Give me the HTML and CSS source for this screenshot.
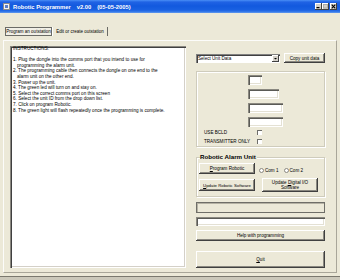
FILE: index.html
```html
<!DOCTYPE html>
<html>
<head>
<meta charset="utf-8">
<title>Robotic Programmer</title>
<link rel="stylesheet" href="styles.css">
</head>
<body>
<div class="window">
  <div class="titlebar">
    <svg class="app-icon" viewBox="0 0 7 7" width="7" height="7">
      <rect x="0.5" y="0.5" width="6" height="6" fill="#f4f4f4" stroke="#8c8c8c" stroke-width="1"/>
      <rect x="2" y="2" width="3" height="3" fill="#5a7fc8"/>
    </svg>
    <span class="title">Robotic Programmer<span class="gap"></span>v2.00<span class="gap"></span>(05-05-2005)</span>
    <div class="controls">
      <svg class="ctl" viewBox="0 0 7 7" width="7" height="7"><rect x="1.5" y="4" width="3" height="1.2" fill="#000"/></svg>
      <svg class="ctl" viewBox="0 0 7 7" width="7" height="7"><rect x="1.5" y="1.5" width="4" height="3.5" fill="none" stroke="#a8a8a8" stroke-width="0.9"/></svg>
      <svg class="ctl close" viewBox="0 0 7 7" width="7" height="7"><path d="M1.7 1.7 L5.3 5.3 M5.3 1.7 L1.7 5.3" stroke="#000" stroke-width="1.1"/></svg>
    </div>
  </div>

  <div class="tabs">
    <div class="tab active">Program an outstation</div>
    <div class="tab second">Edit or create outstation</div>
  </div>

  <div class="panel">
    <div class="instructions">
      <div>INSTRUCTIONS:</div>
      <div>&nbsp;</div>
      <div>1. Plug the dongle into the comms port that you intend to use for</div>
      <div class="cont">programming the alarm unit.</div>
      <div>2. The programming cable then connects the dongle on one end to the</div>
      <div class="cont">alarm unit on the other end.</div>
      <div>3. Power up the unit.</div>
      <div>4. The green led will turn on and stay on.</div>
      <div>5. Select the correct comms port on this screen</div>
      <div>6. Select the unit ID from the drop down list.</div>
      <div>7. Click on program Robotic.</div>
      <div>8. The green light will flash repeatedly once the programming is complete.</div>
    </div>

    <div class="side">
      <div class="combo-row">
        <div class="combo">
          <span>Select Unit Data</span>
          <span class="drop"><svg viewBox="0 0 7 7" width="7" height="7"><path d="M2 3 L5 3 L3.5 4.6 Z" fill="#000"/></svg></span>
        </div>
        <div class="btn copy">Copy unit data</div>
      </div>

      <div class="group unit">
        <div class="field f1"></div>
        <div class="field f2"></div>
        <div class="field f3"></div>
        <div class="field f4"></div>
        <div class="check-row"><span class="lbl">USE BCLD</span><span class="check"></span></div>
        <div class="check-row"><span class="lbl">TRANSMITTER ONLY</span><span class="check"></span></div>
      </div>

      <fieldset class="alarm">
        <legend>Robotic Alarm Unit</legend>
        <div class="alarm-row row1">
          <div class="btn prog"><span><u>P</u>rogram Robotic</span></div>
          <div class="radios">
            <span class="radio"></span><span class="radio-lbl">Com 1</span>
            <span class="radio"></span><span class="radio-lbl">Com 2</span>
          </div>
        </div>
        <div class="alarm-row row2">
          <div class="btn upd-rob"><span><u>U</u>pdate Robotic Software</span></div>
          <div class="btn upd-dig"><span>Update <u>D</u>igital I/O</span><span>Software</span></div>
        </div>
      </fieldset>

      <div class="status"></div>
      <div class="field wide"></div>
      <div class="btn help">Help with programming</div>
      <div class="btn quit"><span><u>Q</u>uit</span></div>
    </div>
  </div>

  <div class="frame-bottom"></div>
</div>
</body>
</html>
```

FILE: styles.css
```css
* { box-sizing: border-box; }
html, body { margin: 0; padding: 0; }
body {
  width: 340px;
  height: 280px;
  overflow: hidden;
  background: #ECE9D8;
  font-family: "Liberation Sans", Arial, sans-serif;
  font-size: 4.6px;
  color: #000;
}
.window {
  width: 340px;
  height: 280px;
  display: flex;
  flex-direction: column;
  background: #ECE9D8;
}

/* title bar */
.titlebar {
  height: 13px;
  flex: none;
  display: flex;
  align-items: center;
  padding-left: 3px;
  background: linear-gradient(#4A8EF6 0, #2063E4 2px, #1259DE 6px, #1A61E2 10px, #3A7DEA 12px, #6CA0EE 13px);
  color: #fff;
}
.app-icon { flex: none; display: block; }
.title {
  margin-left: 3px;
  font-weight: bold;
  font-size: 5.8px;
  white-space: nowrap;
}
.gap { display: inline-block; width: 6px; }
.controls {
  margin-left: auto;
  margin-right: 3px;
  display: flex;
}
.ctl {
  display: block;
  background: #D4D0C8;
  box-shadow: inset -1px -1px #404040, inset 1px 1px #fff;
}
.ctl.close { margin-left: 1px; }

/* tabs */
.tabs {
  display: flex;
  margin-top: 14px;
  padding-left: 5px;
  height: 9px;
  flex: none;
}
.tab {
  height: 9px;
  display: flex;
  align-items: center;
  justify-content: center;
  white-space: nowrap;
  font-size: 4.5px;
}
.tab.active {
  width: 47px;
  border: 1px solid #6b6b66;
  background: #F1EFE6;
}
.tab.second {
  width: 56px;
  border-left: 1px solid #fff;
  border-right: 1px solid #6b6b66;
}

/* panel */
.panel {
  flex: none;
  margin: 4px 0 0 3px;
  width: 334px;
  height: 233px;
  border: 1px solid;
  border-color: #FCFCFA #A9A699 #A9A699 #FCFCFA;
  display: flex;
  padding: 5px 10px 4px 6px;
}
.instructions {
  flex: none;
  width: 176px;
  height: 222px;
  background: #fff;
  box-shadow: inset 1px 1px #8a8880, inset 2px 2px #404040, inset -1px -1px #fff, inset -2px -2px #D4D0C8;
  padding: 0 3px;
  font-size: 4.65px;
  line-height: 5.6px;
  white-space: nowrap;
}
.instructions .cont { padding-left: 4px; }

/* right column */
.side {
  flex: none;
  width: 129px;
  margin-left: 10px;
  display: flex;
  flex-direction: column;
}
.combo-row {
  display: flex;
  align-items: center;
  margin-top: 7px;
  height: 10px;
}
.combo {
  width: 84px;
  height: 9px;
  background: #fff;
  box-shadow: inset 1px 1px #808080, inset 2px 2px #404040, inset -1px -1px #fff;
  display: flex;
  align-items: center;
  padding: 0 1px 0 2px;
  white-space: nowrap;
}
.drop {
  margin-left: auto;
  width: 7px;
  height: 7px;
  background: #D4D0C8;
  box-shadow: inset -1px -1px #404040, inset 1px 1px #fff;
}
.drop svg { display: block; }

.btn {
  display: flex;
  align-items: center;
  justify-content: center;
  background: #ECE9D8;
  box-shadow: inset -1px -1px #404040, inset 1px 1px #fff, inset -2px -2px #8a8880;
  text-align: center;
  white-space: nowrap;
}
.btn.copy { width: 41px; height: 10px; margin-left: 4px; }

.group {
  border: 1px solid #CFCCBC;
  box-shadow: inset 1px 1px #fff, 1px 1px #fff;
}
.unit {
  margin-top: 8px;
  height: 77px;
  padding-top: 3px;
  display: flex;
  flex-direction: column;
}
.field {
  height: 10px;
  background: #fff;
  box-shadow: inset 1px 1px #8a8880, inset 2px 2px #5a5a56, inset -1px -1px #fff, inset -2px -2px #E4E1D4;
}
.unit .field { margin-left: 51px; margin-bottom: 4px; }
.unit .f4 { margin-bottom: 1px; }
.f1 { width: 14px; }
.f2 { width: 31px; }
.f3, .f4 { width: 35px; }
.check-row {
  display: flex;
  align-items: center;
  height: 9px;
  padding-left: 7px;
  white-space: nowrap;
}
.check-row .lbl { width: 53px; }
.check {
  width: 5px;
  height: 5px;
  background: #fff;
  box-shadow: inset 1px 1px #6e6e6a;
}

.alarm {
  margin: 7px 0 0;
  padding: 0 2px 4px;
  border: 1px solid #CFCCBC;
  box-shadow: inset 1px 1px #fff, 1px 1px #fff;
  min-width: 0;
}
.alarm legend {
  padding: 0 1px 0 0;
  margin-left: 1px;
  font-weight: bold;
  font-size: 6.2px;
  line-height: 6px;
  background: #ECE9D8;
  white-space: nowrap;
}
.alarm-row { display: flex; align-items: center; }
.row1 { margin-top: 3px; }
.prog { width: 56px; height: 11px; }
.radios {
  display: flex;
  align-items: center;
  margin-left: 4px;
  margin-top: 3px;
  white-space: nowrap;
}
.radio {
  width: 5px;
  height: 5px;
  border-radius: 50%;
  background: #fff;
  border: 1px solid #8a8880;
}
.radio-lbl { margin-left: 1px; }
.radio-lbl + .radio { margin-left: 5px; }
.row2 { margin-top: 4px; }
.upd-rob { width: 56px; height: 12px; font-size: 4.3px; }
.upd-dig {
  width: 56px;
  height: 14px;
  margin-left: 7px;
  flex-direction: column;
  line-height: 5px;
}

.status {
  margin-top: 5px;
  height: 11px;
  border: 1px solid #6f6e68;
  box-shadow: inset 1px 1px #B5B2A4;
}
.field.wide { margin-top: 4px; height: 9px; }
.btn.help { margin-top: 4px; height: 11px; }
.btn.quit { margin-top: 10px; height: 17px; }

.frame-bottom {
  margin-top: auto;
  height: 4px;
  flex: none;
  border-top: 1px solid #7A786E;
  background: #CBC8BA;
}
```
